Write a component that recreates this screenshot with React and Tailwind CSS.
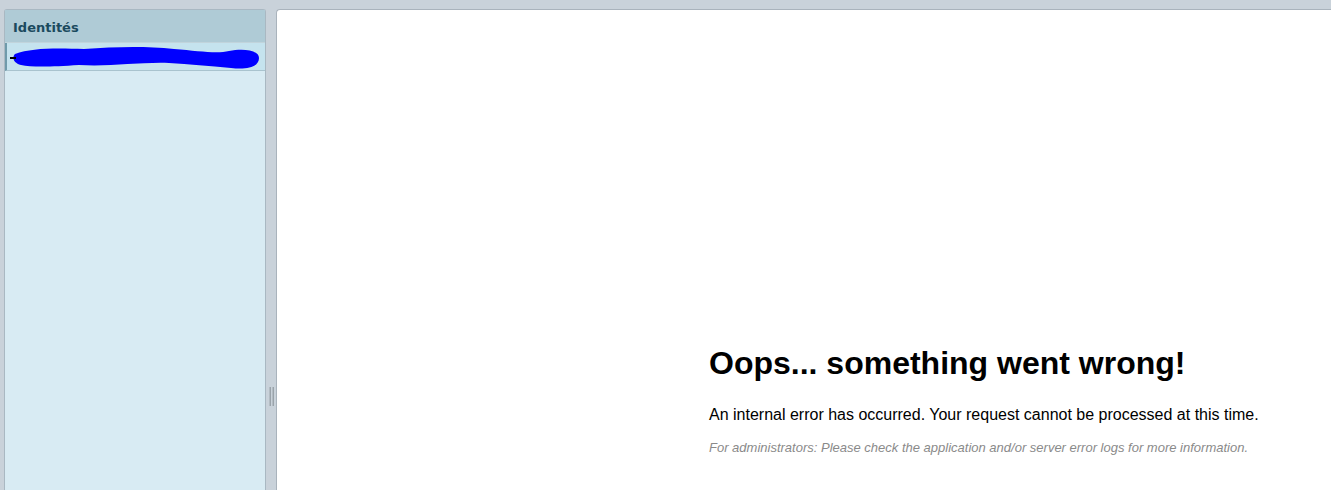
import React from "react";

const Redaction = () => (
  <svg width="252" height="28" viewBox="0 0 252 28" className="absolute left-[2px] top-[2px]">
    <path
      d="M6 9 C 22 3, 45 3, 75 4 C 105 2, 135 1, 165 4 C 190 6, 208 9, 220 6 C 234 3, 250 5, 250 13 C 250 22, 238 25, 222 23 C 200 21, 180 19, 160 18 C 130 17, 100 22, 70 20 C 40 22, 22 22, 12 20 C 4 18, 3 12, 6 9 Z"
      fill="#0000ff"
    />
    <path d="M1 13 L7 13" stroke="#000" strokeWidth="2" />
  </svg>
);

export default function App() {
  return (
    <div className="w-[1331px] h-[490px] bg-[#c9d2da] flex pt-[9px] pl-[4px] overflow-hidden font-['Liberation_Sans',Arial,sans-serif]">
      {/* left panel */}
      <div className="w-[262px] h-full flex flex-col bg-[#d8ebf3] border border-b-0 border-[#a9b8c2] rounded-t-[3px]">
        <div className="h-[33px] bg-[#afcbd6] flex items-center pl-[8px] pt-[3px] text-[13px] font-bold text-[#1b4a5e] font-['DejaVu_Sans',Verdana,sans-serif] border-b border-[#c1d4dc]">
          Identités
        </div>
        <div className="relative h-[28px] bg-[#c5e3ee] border-l-2 border-[#6f9aaa] border-b border-b-[#a9c3ce]">
          <Redaction />
        </div>
        <div className="flex-1" />
      </div>

      {/* splitter */}
      <div className="w-[10px] h-full flex justify-center">
        <div className="flex gap-[1px] mt-[378px] h-[19px]">
          <div className="w-[2px] h-[19px] bg-[#9aa3aa] border-l border-[#b3bcc3]" />
          <div className="w-[2px] h-[19px] bg-[#9aa3aa] border-l border-[#b3bcc3]" />
        </div>
      </div>

      {/* main panel */}
      <div className="flex-1 h-full bg-white border border-b-0 border-r-0 border-[#a9b3bc] rounded-tl-[4px] pl-[432px] pt-[333px]">
        <h1 className="text-[32px] leading-[40px] font-bold text-black">Oops... something went wrong!</h1>
        <p className="mt-[22px] text-[16px] leading-[20px] text-black">
          An internal error has occurred. Your request cannot be processed at this time.
        </p>
        <p className="mt-[15px] text-[13px] leading-[16px] italic text-[#8a8a8a]">
          For administrators: Please check the application and/or server error logs for more information.
        </p>
      </div>
    </div>
  );
}
